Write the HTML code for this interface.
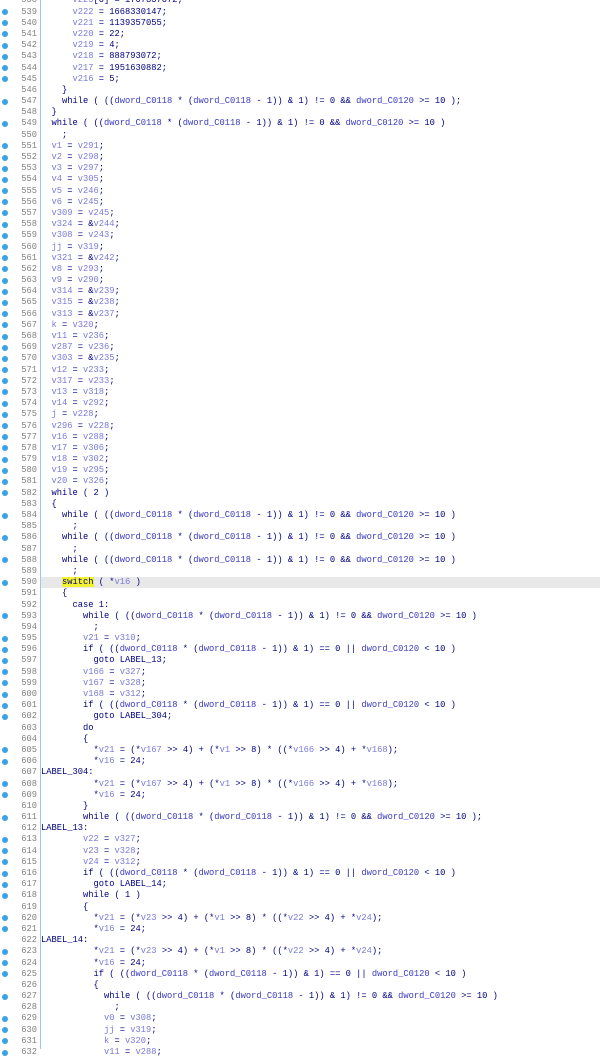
<!DOCTYPE html>
<html><head><meta charset="utf-8"><style>
html,body{margin:0;padding:0;background:#fff;width:600px;height:1049px;overflow:hidden}
#w{position:absolute;top:-4.6px;left:0;width:600px}
.l{position:relative;height:11.2px;line-height:11.2px;font-family:"Liberation Mono",monospace;font-size:8.75px;white-space:pre;color:#000080}
.n{position:absolute;left:17px;width:20px;text-align:right;color:#808080}
.d::before{content:"";position:absolute;left:2px;top:2.5px;width:6px;height:6px;border-radius:50%;background:#3aa2e6}
.c{position:absolute;left:41px}
b{font-weight:normal;color:#7a7ad8}
i{font-style:normal;color:#3a3ac0}
.hl{background:#e8e8e8}
.y{background:#f2f230}
#sep{position:absolute;left:40px;top:0;width:1px;height:1049px;background:#9cc8ec}
</style></head><body>
<div id="w">
<div class="l"><span class="n">538</span><span class="c">      <b>v225</b>[0] = 1707337072;</span></div>
<div class="l d"><span class="n">539</span><span class="c">      <b>v222</b> = 1668330147;</span></div>
<div class="l d"><span class="n">540</span><span class="c">      <b>v221</b> = 1139357055;</span></div>
<div class="l d"><span class="n">541</span><span class="c">      <b>v220</b> = 22;</span></div>
<div class="l d"><span class="n">542</span><span class="c">      <b>v219</b> = 4;</span></div>
<div class="l d"><span class="n">543</span><span class="c">      <b>v218</b> = 888793072;</span></div>
<div class="l d"><span class="n">544</span><span class="c">      <b>v217</b> = 1951630882;</span></div>
<div class="l d"><span class="n">545</span><span class="c">      <b>v216</b> = 5;</span></div>
<div class="l"><span class="n">546</span><span class="c">    }</span></div>
<div class="l d"><span class="n">547</span><span class="c">    while ( ((<i>dword_C0118</i> * (<i>dword_C0118</i> - 1)) &amp; 1) != 0 &amp;&amp; <i>dword_C0120</i> &gt;= 10 );</span></div>
<div class="l"><span class="n">548</span><span class="c">  }</span></div>
<div class="l d"><span class="n">549</span><span class="c">  while ( ((<i>dword_C0118</i> * (<i>dword_C0118</i> - 1)) &amp; 1) != 0 &amp;&amp; <i>dword_C0120</i> &gt;= 10 )</span></div>
<div class="l"><span class="n">550</span><span class="c">    ;</span></div>
<div class="l d"><span class="n">551</span><span class="c">  <b>v1</b> = <b>v291</b>;</span></div>
<div class="l d"><span class="n">552</span><span class="c">  <b>v2</b> = <b>v298</b>;</span></div>
<div class="l d"><span class="n">553</span><span class="c">  <b>v3</b> = <b>v297</b>;</span></div>
<div class="l d"><span class="n">554</span><span class="c">  <b>v4</b> = <b>v305</b>;</span></div>
<div class="l d"><span class="n">555</span><span class="c">  <b>v5</b> = <b>v246</b>;</span></div>
<div class="l d"><span class="n">556</span><span class="c">  <b>v6</b> = <b>v245</b>;</span></div>
<div class="l d"><span class="n">557</span><span class="c">  <b>v309</b> = <b>v245</b>;</span></div>
<div class="l d"><span class="n">558</span><span class="c">  <b>v324</b> = &amp;<b>v244</b>;</span></div>
<div class="l d"><span class="n">559</span><span class="c">  <b>v308</b> = <b>v243</b>;</span></div>
<div class="l d"><span class="n">560</span><span class="c">  <b>jj</b> = <b>v319</b>;</span></div>
<div class="l d"><span class="n">561</span><span class="c">  <b>v321</b> = &amp;<b>v242</b>;</span></div>
<div class="l d"><span class="n">562</span><span class="c">  <b>v8</b> = <b>v293</b>;</span></div>
<div class="l d"><span class="n">563</span><span class="c">  <b>v9</b> = <b>v290</b>;</span></div>
<div class="l d"><span class="n">564</span><span class="c">  <b>v314</b> = &amp;<b>v239</b>;</span></div>
<div class="l d"><span class="n">565</span><span class="c">  <b>v315</b> = &amp;<b>v238</b>;</span></div>
<div class="l d"><span class="n">566</span><span class="c">  <b>v313</b> = &amp;<b>v237</b>;</span></div>
<div class="l d"><span class="n">567</span><span class="c">  <b>k</b> = <b>v320</b>;</span></div>
<div class="l d"><span class="n">568</span><span class="c">  <b>v11</b> = <b>v236</b>;</span></div>
<div class="l d"><span class="n">569</span><span class="c">  <b>v287</b> = <b>v236</b>;</span></div>
<div class="l d"><span class="n">570</span><span class="c">  <b>v303</b> = &amp;<b>v235</b>;</span></div>
<div class="l d"><span class="n">571</span><span class="c">  <b>v12</b> = <b>v233</b>;</span></div>
<div class="l d"><span class="n">572</span><span class="c">  <b>v317</b> = <b>v233</b>;</span></div>
<div class="l d"><span class="n">573</span><span class="c">  <b>v13</b> = <b>v318</b>;</span></div>
<div class="l d"><span class="n">574</span><span class="c">  <b>v14</b> = <b>v292</b>;</span></div>
<div class="l d"><span class="n">575</span><span class="c">  <b>j</b> = <b>v228</b>;</span></div>
<div class="l d"><span class="n">576</span><span class="c">  <b>v296</b> = <b>v228</b>;</span></div>
<div class="l d"><span class="n">577</span><span class="c">  <b>v16</b> = <b>v288</b>;</span></div>
<div class="l d"><span class="n">578</span><span class="c">  <b>v17</b> = <b>v306</b>;</span></div>
<div class="l d"><span class="n">579</span><span class="c">  <b>v18</b> = <b>v302</b>;</span></div>
<div class="l d"><span class="n">580</span><span class="c">  <b>v19</b> = <b>v295</b>;</span></div>
<div class="l d"><span class="n">581</span><span class="c">  <b>v20</b> = <b>v326</b>;</span></div>
<div class="l d"><span class="n">582</span><span class="c">  while ( 2 )</span></div>
<div class="l"><span class="n">583</span><span class="c">  {</span></div>
<div class="l d"><span class="n">584</span><span class="c">    while ( ((<i>dword_C0118</i> * (<i>dword_C0118</i> - 1)) &amp; 1) != 0 &amp;&amp; <i>dword_C0120</i> &gt;= 10 )</span></div>
<div class="l"><span class="n">585</span><span class="c">      ;</span></div>
<div class="l d"><span class="n">586</span><span class="c">    while ( ((<i>dword_C0118</i> * (<i>dword_C0118</i> - 1)) &amp; 1) != 0 &amp;&amp; <i>dword_C0120</i> &gt;= 10 )</span></div>
<div class="l"><span class="n">587</span><span class="c">      ;</span></div>
<div class="l d"><span class="n">588</span><span class="c">    while ( ((<i>dword_C0118</i> * (<i>dword_C0118</i> - 1)) &amp; 1) != 0 &amp;&amp; <i>dword_C0120</i> &gt;= 10 )</span></div>
<div class="l"><span class="n">589</span><span class="c">      ;</span></div>
<div class="l d"><span class="n">590</span><span class="c hl" style="right:0">    <span class="y">switch</span> ( *<b>v16</b> )</span></div>
<div class="l"><span class="n">591</span><span class="c">    {</span></div>
<div class="l"><span class="n">592</span><span class="c">      case 1:</span></div>
<div class="l d"><span class="n">593</span><span class="c">        while ( ((<i>dword_C0118</i> * (<i>dword_C0118</i> - 1)) &amp; 1) != 0 &amp;&amp; <i>dword_C0120</i> &gt;= 10 )</span></div>
<div class="l"><span class="n">594</span><span class="c">          ;</span></div>
<div class="l d"><span class="n">595</span><span class="c">        <b>v21</b> = <b>v310</b>;</span></div>
<div class="l d"><span class="n">596</span><span class="c">        if ( ((<i>dword_C0118</i> * (<i>dword_C0118</i> - 1)) &amp; 1) == 0 || <i>dword_C0120</i> &lt; 10 )</span></div>
<div class="l d"><span class="n">597</span><span class="c">          goto LABEL_13;</span></div>
<div class="l d"><span class="n">598</span><span class="c">        <b>v166</b> = <b>v327</b>;</span></div>
<div class="l d"><span class="n">599</span><span class="c">        <b>v167</b> = <b>v328</b>;</span></div>
<div class="l d"><span class="n">600</span><span class="c">        <b>v168</b> = <b>v312</b>;</span></div>
<div class="l d"><span class="n">601</span><span class="c">        if ( ((<i>dword_C0118</i> * (<i>dword_C0118</i> - 1)) &amp; 1) == 0 || <i>dword_C0120</i> &lt; 10 )</span></div>
<div class="l d"><span class="n">602</span><span class="c">          goto LABEL_304;</span></div>
<div class="l"><span class="n">603</span><span class="c">        do</span></div>
<div class="l"><span class="n">604</span><span class="c">        {</span></div>
<div class="l d"><span class="n">605</span><span class="c">          *<b>v21</b> = (*<b>v167</b> &gt;&gt; 4) + (*<b>v1</b> &gt;&gt; 8) * ((*<b>v166</b> &gt;&gt; 4) + *<b>v168</b>);</span></div>
<div class="l d"><span class="n">606</span><span class="c">          *<b>v16</b> = 24;</span></div>
<div class="l"><span class="n">607</span><span class="c">LABEL_304:</span></div>
<div class="l d"><span class="n">608</span><span class="c">          *<b>v21</b> = (*<b>v167</b> &gt;&gt; 4) + (*<b>v1</b> &gt;&gt; 8) * ((*<b>v166</b> &gt;&gt; 4) + *<b>v168</b>);</span></div>
<div class="l d"><span class="n">609</span><span class="c">          *<b>v16</b> = 24;</span></div>
<div class="l"><span class="n">610</span><span class="c">        }</span></div>
<div class="l d"><span class="n">611</span><span class="c">        while ( ((<i>dword_C0118</i> * (<i>dword_C0118</i> - 1)) &amp; 1) != 0 &amp;&amp; <i>dword_C0120</i> &gt;= 10 );</span></div>
<div class="l"><span class="n">612</span><span class="c">LABEL_13:</span></div>
<div class="l d"><span class="n">613</span><span class="c">        <b>v22</b> = <b>v327</b>;</span></div>
<div class="l d"><span class="n">614</span><span class="c">        <b>v23</b> = <b>v328</b>;</span></div>
<div class="l d"><span class="n">615</span><span class="c">        <b>v24</b> = <b>v312</b>;</span></div>
<div class="l d"><span class="n">616</span><span class="c">        if ( ((<i>dword_C0118</i> * (<i>dword_C0118</i> - 1)) &amp; 1) == 0 || <i>dword_C0120</i> &lt; 10 )</span></div>
<div class="l d"><span class="n">617</span><span class="c">          goto LABEL_14;</span></div>
<div class="l d"><span class="n">618</span><span class="c">        while ( 1 )</span></div>
<div class="l"><span class="n">619</span><span class="c">        {</span></div>
<div class="l d"><span class="n">620</span><span class="c">          *<b>v21</b> = (*<b>v23</b> &gt;&gt; 4) + (*<b>v1</b> &gt;&gt; 8) * ((*<b>v22</b> &gt;&gt; 4) + *<b>v24</b>);</span></div>
<div class="l d"><span class="n">621</span><span class="c">          *<b>v16</b> = 24;</span></div>
<div class="l"><span class="n">622</span><span class="c">LABEL_14:</span></div>
<div class="l d"><span class="n">623</span><span class="c">          *<b>v21</b> = (*<b>v23</b> &gt;&gt; 4) + (*<b>v1</b> &gt;&gt; 8) * ((*<b>v22</b> &gt;&gt; 4) + *<b>v24</b>);</span></div>
<div class="l d"><span class="n">624</span><span class="c">          *<b>v16</b> = 24;</span></div>
<div class="l d"><span class="n">625</span><span class="c">          if ( ((<i>dword_C0118</i> * (<i>dword_C0118</i> - 1)) &amp; 1) == 0 || <i>dword_C0120</i> &lt; 10 )</span></div>
<div class="l"><span class="n">626</span><span class="c">          {</span></div>
<div class="l d"><span class="n">627</span><span class="c">            while ( ((<i>dword_C0118</i> * (<i>dword_C0118</i> - 1)) &amp; 1) != 0 &amp;&amp; <i>dword_C0120</i> &gt;= 10 )</span></div>
<div class="l"><span class="n">628</span><span class="c">              ;</span></div>
<div class="l d"><span class="n">629</span><span class="c">            <b>v0</b> = <b>v308</b>;</span></div>
<div class="l d"><span class="n">630</span><span class="c">            <b>jj</b> = <b>v319</b>;</span></div>
<div class="l d"><span class="n">631</span><span class="c">            <b>k</b> = <b>v320</b>;</span></div>
<div class="l d"><span class="n">632</span><span class="c">            <b>v11</b> = <b>v288</b>;</span></div>
</div>
<div id="sep"></div>
</body></html>
